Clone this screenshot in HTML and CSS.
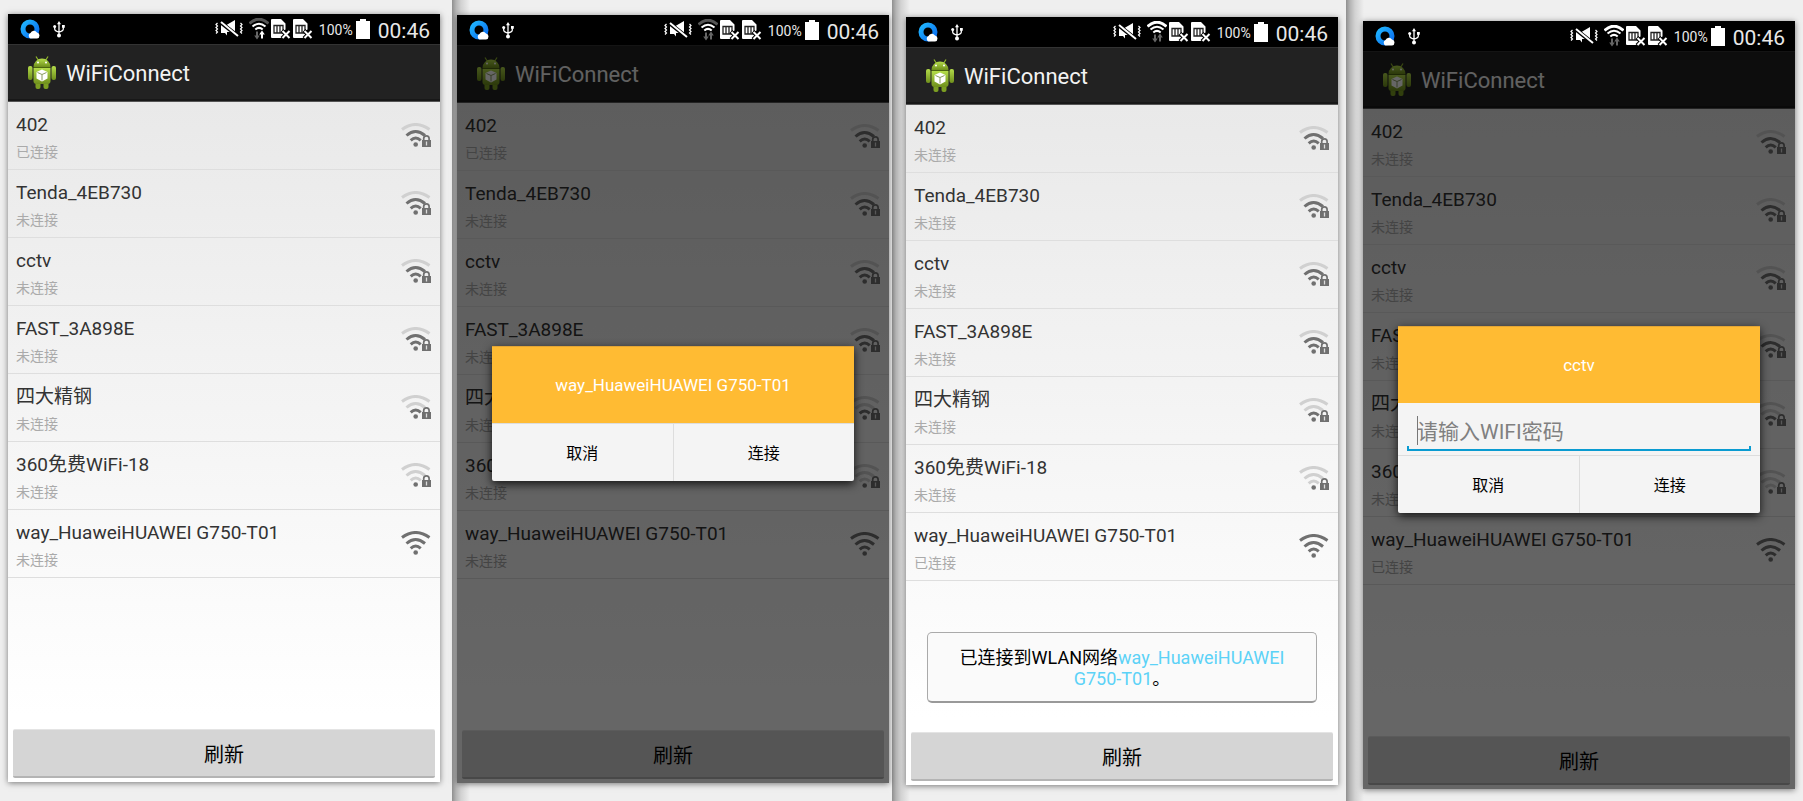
FILE: index.html
```html
<!DOCTYPE html>
<html lang="zh-CN">
<head>
    <meta charset="UTF-8">
    <meta name="viewport" content="width=device-width, initial-scale=1.0">
    <title>WiFiConnect</title>
    <link rel="stylesheet" href="styles.css">
</head>
<body>
    <!-- Shared icons -->
    <svg class="sprite" aria-hidden="true">
        <defs>
            <linearGradient id="ring" x1="0" y1="0" x2="1" y2="1">
                <stop offset="0" stop-color="#1fb6ff"/>
                <stop offset="1" stop-color="#0a6cf0"/>
            </linearGradient>
            <linearGradient id="green" x1="0" y1="0" x2="0" y2="1">
                <stop offset="0" stop-color="#b4dc4a"/>
                <stop offset="1" stop-color="#6f8f1c"/>
            </linearGradient>
        </defs>
        <symbol id="browser" viewBox="0 0 20 20">
            <circle cx="10" cy="10" r="7" fill="none" stroke="url(#ring)" stroke-width="5"/>
            <path d="M10.5 19.5a3 3 0 0 1 0-5.500a3.700 3.700 0 0 1 6.500-0.500a3 3 0 0 1 2.500 3a3 3 0 0 1-2.500 3z" fill="#fff"/>
        </symbol>
        <symbol id="usb" viewBox="0 0 12 17">
            <path d="M6 2v12M1.700 5.500v2.500q0 2 4.300 3q4.300-1 4.300-3v-2.500" fill="none" stroke="#fff" stroke-width="1.300"/>
            <path d="M6 0l2 3.200H4zM9 4h2.800v2.800H9z" fill="#fff"/>
            <circle cx="1.700" cy="5.500" r="1.500" fill="#fff"/>
            <circle cx="6" cy="14.600" r="2" fill="#fff"/>
        </symbol>
        <symbol id="mute" viewBox="0 0 28 18">
            <path d="M2.500 3l-1.500 1.500 1.500 1.500-1.500 1.500 1.500 1.500-1.500 1.500 1.500 1.500-1.500 1.500M25.500 3l1.500 1.500-1.500 1.500 1.500 1.500-1.500 1.500 1.500 1.500-1.500 1.500 1.500 1.500" fill="none" stroke="#fff" stroke-width="1.200"/>
            <path d="M6 4.500h2L17 12.500v-0.500L12 12v3.500l-2-2.500H6z" fill="#fff"/>
            <path d="M11.500 5L20 0v12.500z" fill="#fff"/>
            <path d="M4.500 1.500L23.500 16.500" stroke="#000" stroke-width="4"/>
            <path d="M6 2L23 16" stroke="#fff" stroke-width="2"/>
        </symbol>
        <symbol id="status-wifi" viewBox="0 0 20 22">
            <path class="bar-3" d="M0.500 5.500q9.500-8.500 19 0"/>
            <path class="bar-lit" d="M3.500 8.500q6.500-5.600 13 0M6.300 11.500q3.700-3.200 7.400 0"/>
            <path class="arrow-down" d="M7 13.500h2v4h1.800L8 21.500l-2.800-4H7z"/>
            <path class="arrow-up" d="M12 20.500h2v-4h1.800L13 12.500l-2.800 4H12z"/>
        </symbol>
        <symbol id="sim" viewBox="0 0 20 20">
            <path d="M0 1q0-1 1-1h9l4.500 4.500v6l-3 2 2 3-2.500 3.500H1q-1 0-1-1z" fill="#fff"/>
            <path d="M3 6.500h9v7.500H3zM6 6.500v7.500M9 6.500v7.500" fill="none" stroke="#222" stroke-width="1.300"/>
            <path d="M11 11.500l8 8M19 11.500l-8 8" stroke="#000" stroke-width="4"/>
            <path d="M11.500 12l7 7M18.500 12l-7 7" stroke="#fff" stroke-width="2"/>
        </symbol>
        <symbol id="battery" viewBox="0 0 14 20">
            <path d="M4 0h6v2h4v18H0V2h4z" fill="#fff"/>
        </symbol>
        <symbol id="android" viewBox="0 0 28 34">
            <path d="M8 0.500l2.500 4M20 0.500l-2.500 4" stroke="#8fb52b" stroke-width="1.200"/>
            <path d="M5.500 11a8.500 8.500 0 0 1 17 0z" fill="url(#green)"/>
            <rect x="0" y="10" width="4.500" height="14" rx="2" fill="url(#green)"/>
            <rect x="23.500" y="10" width="4.500" height="14" rx="2" fill="url(#green)"/>
            <rect x="7.500" y="24" width="5" height="9" rx="2" fill="#7c9e22"/>
            <rect x="15.500" y="24" width="5" height="9" rx="2" fill="#7c9e22"/>
            <path d="M5.500 12h17v13q0 3-3 3h-11q-3 0-3-3z" fill="url(#green)"/>
            <path d="M5.500 11.500h17" stroke="#4c6410" stroke-width="1"/>
            <circle cx="10" cy="6.500" r="1" fill="#fff"/>
            <circle cx="18" cy="6.500" r="1" fill="#fff"/>
            <path d="M14 13.500l5.500 2.500v6.500L14 25.500l-5.500-3V16z" fill="#fff"/>
            <path d="M9.500 16.500l4.500 2 4.500-2M14 18.500v6" fill="none" stroke="#8a9a60" stroke-width="1"/>
        </symbol>
        <symbol id="wifi" viewBox="0 0 30 24">
            <path class="bar-3" d="M1 6.500q13.500-10 27.500 0"/>
            <path class="bar-2" d="M5.500 12.500q9-8 18.500 0"/>
            <path class="bar-1" d="M9.700 17.300q5-4.600 10 0"/>
            <circle class="dot" cx="14.700" cy="21.500" r="2.300"/>
        </symbol>
        <symbol id="lock" viewBox="0 0 30 24">
            <path d="M22.700 17.500v-2a2.700 2.700 0 0 1 5.400 0v2" fill="none" stroke="#707070" stroke-width="1.700"/>
            <path d="M21 17h9v7h-9z" fill="#707070"/>
            <path d="M25.500 18.500v4" stroke="#ddd" stroke-width="1.300"/>
        </symbol>
    </svg>

    <main class="board">
        <section class="panel panel-list">
            <div class="phone">
                <div class="status-bar">
                    <svg class="icon-browser"><use href="#browser"/></svg>
                    <svg class="icon-usb"><use href="#usb"/></svg>
                    <svg class="icon-mute"><use href="#mute"/></svg>
                    <svg class="icon-signal weak sending"><use href="#status-wifi"/></svg>
                    <svg class="icon-sim"><use href="#sim"/></svg>
                    <svg class="icon-sim"><use href="#sim"/></svg>
                    <span class="charge">100%</span>
                    <svg class="icon-battery"><use href="#battery"/></svg>
                    <span class="clock">00:46</span>
                </div>
                <header class="action-bar">
                    <svg class="icon-android"><use href="#android"/></svg>
                    <h1>WiFiConnect</h1>
                </header>
                <div class="content">
                    <ul class="network-list">
                        <li><div><h2>402</h2><p>已连接</p></div><svg class="wifi level-2"><use href="#wifi"/><use href="#lock"/></svg></li>
                        <li><div><h2>Tenda_4EB730</h2><p>未连接</p></div><svg class="wifi level-2"><use href="#wifi"/><use href="#lock"/></svg></li>
                        <li><div><h2>cctv</h2><p>未连接</p></div><svg class="wifi level-2"><use href="#wifi"/><use href="#lock"/></svg></li>
                        <li><div><h2>FAST_3A898E</h2><p>未连接</p></div><svg class="wifi level-2"><use href="#wifi"/><use href="#lock"/></svg></li>
                        <li><div><h2>四大精钢</h2><p>未连接</p></div><svg class="wifi level-1"><use href="#wifi"/><use href="#lock"/></svg></li>
                        <li><div><h2>360免费WiFi-18</h2><p>未连接</p></div><svg class="wifi level-0"><use href="#wifi"/><use href="#lock"/></svg></li>
                        <li><div><h2>way_HuaweiHUAWEI G750-T01</h2><p>未连接</p></div><svg class="wifi"><use href="#wifi"/></svg></li>
                    </ul>
                    <button class="refresh" type="button">刷新</button>
                </div>
            </div>
        </section>

        <section class="panel panel-confirm">
            <div class="phone">
                <div class="status-bar">
                    <svg class="icon-browser"><use href="#browser"/></svg>
                    <svg class="icon-usb"><use href="#usb"/></svg>
                    <svg class="icon-mute"><use href="#mute"/></svg>
                    <svg class="icon-signal weak"><use href="#status-wifi"/></svg>
                    <svg class="icon-sim"><use href="#sim"/></svg>
                    <svg class="icon-sim"><use href="#sim"/></svg>
                    <span class="charge">100%</span>
                    <svg class="icon-battery"><use href="#battery"/></svg>
                    <span class="clock">00:46</span>
                </div>
                <header class="action-bar">
                    <svg class="icon-android"><use href="#android"/></svg>
                    <h1>WiFiConnect</h1>
                </header>
                <div class="content">
                    <ul class="network-list">
                        <li><div><h2>402</h2><p>已连接</p></div><svg class="wifi level-2"><use href="#wifi"/><use href="#lock"/></svg></li>
                        <li><div><h2>Tenda_4EB730</h2><p>未连接</p></div><svg class="wifi level-2"><use href="#wifi"/><use href="#lock"/></svg></li>
                        <li><div><h2>cctv</h2><p>未连接</p></div><svg class="wifi level-2"><use href="#wifi"/><use href="#lock"/></svg></li>
                        <li><div><h2>FAST_3A898E</h2><p>未连接</p></div><svg class="wifi level-2"><use href="#wifi"/><use href="#lock"/></svg></li>
                        <li><div><h2>四大精钢</h2><p>未连接</p></div><svg class="wifi level-1"><use href="#wifi"/><use href="#lock"/></svg></li>
                        <li><div><h2>360免费WiFi-18</h2><p>未连接</p></div><svg class="wifi level-0"><use href="#wifi"/><use href="#lock"/></svg></li>
                        <li><div><h2>way_HuaweiHUAWEI G750-T01</h2><p>未连接</p></div><svg class="wifi"><use href="#wifi"/></svg></li>
                    </ul>
                    <button class="refresh" type="button">刷新</button>
                </div>
                <div class="overlay">
                    <div class="dialog" role="dialog" aria-labelledby="confirmTitle">
                        <h3 id="confirmTitle">way_HuaweiHUAWEI G750-T01</h3>
                        <div class="dialog-buttons">
                            <button type="button">取消</button>
                            <button type="button">连接</button>
                        </div>
                    </div>
                </div>
            </div>
        </section>

        <section class="panel panel-toast">
            <div class="phone">
                <div class="status-bar">
                    <svg class="icon-browser"><use href="#browser"/></svg>
                    <svg class="icon-usb"><use href="#usb"/></svg>
                    <svg class="icon-mute"><use href="#mute"/></svg>
                    <svg class="icon-signal"><use href="#status-wifi"/></svg>
                    <svg class="icon-sim"><use href="#sim"/></svg>
                    <svg class="icon-sim"><use href="#sim"/></svg>
                    <span class="charge">100%</span>
                    <svg class="icon-battery"><use href="#battery"/></svg>
                    <span class="clock">00:46</span>
                </div>
                <header class="action-bar">
                    <svg class="icon-android"><use href="#android"/></svg>
                    <h1>WiFiConnect</h1>
                </header>
                <div class="content">
                    <ul class="network-list">
                        <li><div><h2>402</h2><p>未连接</p></div><svg class="wifi level-2"><use href="#wifi"/><use href="#lock"/></svg></li>
                        <li><div><h2>Tenda_4EB730</h2><p>未连接</p></div><svg class="wifi level-2"><use href="#wifi"/><use href="#lock"/></svg></li>
                        <li><div><h2>cctv</h2><p>未连接</p></div><svg class="wifi level-2"><use href="#wifi"/><use href="#lock"/></svg></li>
                        <li><div><h2>FAST_3A898E</h2><p>未连接</p></div><svg class="wifi level-2"><use href="#wifi"/><use href="#lock"/></svg></li>
                        <li><div><h2>四大精钢</h2><p>未连接</p></div><svg class="wifi level-1"><use href="#wifi"/><use href="#lock"/></svg></li>
                        <li><div><h2>360免费WiFi-18</h2><p>未连接</p></div><svg class="wifi level-0"><use href="#wifi"/><use href="#lock"/></svg></li>
                        <li><div><h2>way_HuaweiHUAWEI G750-T01</h2><p>已连接</p></div><svg class="wifi"><use href="#wifi"/></svg></li>
                    </ul>
                    <button class="refresh" type="button">刷新</button>
                </div>
                <div class="toast" role="status">已连接到WLAN网络<span>way_HuaweiHUAWEI G750-T01</span>。</div>
            </div>
        </section>

        <section class="panel panel-password">
            <div class="phone">
                <div class="status-bar">
                    <svg class="icon-browser"><use href="#browser"/></svg>
                    <svg class="icon-usb"><use href="#usb"/></svg>
                    <svg class="icon-mute"><use href="#mute"/></svg>
                    <svg class="icon-signal"><use href="#status-wifi"/></svg>
                    <svg class="icon-sim"><use href="#sim"/></svg>
                    <svg class="icon-sim"><use href="#sim"/></svg>
                    <span class="charge">100%</span>
                    <svg class="icon-battery"><use href="#battery"/></svg>
                    <span class="clock">00:46</span>
                </div>
                <header class="action-bar">
                    <svg class="icon-android"><use href="#android"/></svg>
                    <h1>WiFiConnect</h1>
                </header>
                <div class="content">
                    <ul class="network-list">
                        <li><div><h2>402</h2><p>未连接</p></div><svg class="wifi level-2"><use href="#wifi"/><use href="#lock"/></svg></li>
                        <li><div><h2>Tenda_4EB730</h2><p>未连接</p></div><svg class="wifi level-2"><use href="#wifi"/><use href="#lock"/></svg></li>
                        <li><div><h2>cctv</h2><p>未连接</p></div><svg class="wifi level-2"><use href="#wifi"/><use href="#lock"/></svg></li>
                        <li><div><h2>FAST_3A898E</h2><p>未连接</p></div><svg class="wifi level-2"><use href="#wifi"/><use href="#lock"/></svg></li>
                        <li><div><h2>四大精钢</h2><p>未连接</p></div><svg class="wifi level-1"><use href="#wifi"/><use href="#lock"/></svg></li>
                        <li><div><h2>360免费WiFi-18</h2><p>未连接</p></div><svg class="wifi level-0"><use href="#wifi"/><use href="#lock"/></svg></li>
                        <li><div><h2>way_HuaweiHUAWEI G750-T01</h2><p>已连接</p></div><svg class="wifi"><use href="#wifi"/></svg></li>
                    </ul>
                    <button class="refresh" type="button">刷新</button>
                </div>
                <div class="overlay">
                    <form class="dialog" role="dialog" aria-labelledby="passwordTitle">
                        <h3 id="passwordTitle">cctv</h3>
                        <div class="field">
                            <div class="field-line">
                                <input type="text" aria-labelledby="passwordTitle" placeholder="请输入WIFI密码">
                            </div>
                        </div>
                        <div class="dialog-buttons">
                            <button type="button">取消</button>
                            <button type="button">连接</button>
                        </div>
                    </form>
                </div>
            </div>
        </section>
    </main>
</body>
</html>
```

FILE: styles.css
```css
* {
    box-sizing: border-box;
}

body {
    margin: 0;
    background: #efefef;
    font-family: Roboto, "Noto Sans CJK SC", sans-serif;
}

h1, h2, h3, p, ul {
    margin: 0;
    padding: 0;
    font-weight: 400;
}

button, input {
    font-family: inherit;
    border: none;
}

.sprite {
    position: absolute;
    width: 0;
    height: 0;
}

.board {
    display: flex;
    min-height: 100vh;
}

.panel {
    display: flex;
    min-width: 0;
    background: linear-gradient(to right, #8f8f8f, #b4b4b4 4px, #d2d2d2 9px, #efefef 18px);
}

.panel-list {
    flex: 1 1 452px;
    padding: 14px 12px 19px 8px;
    background: #efefef;
}

.panel-confirm {
    flex: 1 1 440px;
    padding: 15px 3px 18px 5px;
}

.panel-toast {
    flex: 1 1 454px;
    padding: 17px 8px 16px 14px;
}

.panel-password {
    flex: 1 1 457px;
    padding: 21px 8px 12px 17px;
}

.phone {
    position: relative;
    display: flex;
    flex-direction: column;
    flex: 1;
    min-width: 0;
    box-shadow: 0 1px 6px rgba(0, 0, 0, 0.5);
}

/* Status bar */
.status-bar {
    display: flex;
    align-items: center;
    height: 30px;
    padding: 0 10px 0 12px;
    background: #000;
    color: #e8e8e8;
}

.icon-browser {
    width: 20px;
    height: 20px;
}

.icon-usb {
    width: 12px;
    height: 17px;
    margin-left: 13px;
}

.icon-mute {
    width: 28px;
    height: 18px;
    margin-left: auto;
}

.icon-signal {
    width: 20px;
    height: 22px;
    margin: 0 2px 0 6px;
    fill: #666;
    --bar-3: #fff;
    --arrow-up: #666;
}

.icon-signal.weak {
    --bar-3: #555;
}

.icon-signal.sending {
    --arrow-up: #fff;
}

.arrow-up {
    fill: var(--arrow-up);
}

.icon-sim {
    width: 20px;
    height: 20px;
    margin-right: 2px;
}

.charge {
    margin: 2px 3px 0 4px;
    font-size: 14px;
}

.icon-battery {
    width: 14px;
    height: 20px;
    margin-right: 8px;
}

.clock {
    font-size: 21px;
    line-height: 28px;
    padding-top: 3px;
}

/* Action bar */
.action-bar {
    display: flex;
    align-items: center;
    gap: 10px;
    height: 58px;
    padding-left: 20px;
    background: #222;
    border-top: 1px solid #333;
    border-bottom: 1px solid #555;
    box-shadow: inset 0 -2px 0 #181818;
    color: #f3f3f3;
}

.action-bar h1 {
    padding-top: 2px;
    font-size: 22px;
    line-height: 28px;
}

.icon-android {
    width: 28px;
    height: 34px;
}

/* Network list */
.content {
    display: flex;
    flex-direction: column;
    flex: 1;
    padding-bottom: 4px;
    background: linear-gradient(#e9e9e9, #fff 90%);
}

.network-list {
    list-style: none;
    flex: 1;
}

.network-list li {
    display: flex;
    align-items: center;
    justify-content: space-between;
    height: 68px;
    padding: 0 9px 1px 8px;
    border-bottom: 1px solid #dedede;
}

.network-list h2 {
    padding-top: 6px;
    color: #333;
    font-size: 19px;
    line-height: 28px;
}

.network-list p {
    color: #aaa;
    font-size: 14px;
    line-height: 26px;
}

.wifi {
    flex: none;
    width: 30px;
    height: 24px;
    --bar-1: #707070;
    --bar-2: #707070;
    --bar-3: #707070;
}

.wifi.level-2 {
    --bar-3: #d0d0d0;
}

.wifi.level-1 {
    --bar-2: #d0d0d0;
    --bar-3: #d0d0d0;
}

.wifi.level-0 {
    --bar-1: #d0d0d0;
    --bar-2: #d0d0d0;
    --bar-3: #d0d0d0;
}

.bar-1, .bar-2, .bar-3, .bar-lit {
    fill: none;
    stroke-width: 3px;
}

.bar-1 {
    stroke: var(--bar-1);
}

.bar-2 {
    stroke: var(--bar-2);
}

.bar-3 {
    stroke: var(--bar-3);
}

.bar-lit, .icon-signal .bar-3 {
    stroke-width: 2px;
}

.bar-lit {
    stroke: #fff;
}

.dot {
    fill: #707070;
}

.refresh {
    height: 49px;
    margin: 0 5px;
    background: #d5d5d5;
    border-top: 1px solid #e4e4e4;
    border-bottom: 2px solid #b4b4b4;
    border-radius: 2px;
    color: #000;
    font-size: 20px;
}

/* Dialogs */
.overlay {
    position: absolute;
    top: 30px;
    right: 0;
    bottom: 0;
    left: 0;
    display: flex;
    align-items: center;
    padding: 0 35px 2px;
    background: rgba(0, 0, 0, 0.6);
}

.dialog {
    flex: 1;
    background: #f4f4f4;
    border-radius: 2px;
    box-shadow: 0 3px 10px rgba(0, 0, 0, 0.8);
}

.dialog h3 {
    background: #fb3;
    border-top: 1px solid #e3a536;
    color: #fff;
    font-size: 17px;
    line-height: 76px;
    text-align: center;
}

.field {
    padding: 5px 9px 4px;
}

.field-line {
    border: 2px solid #0a9bd1;
    border-top: none;
    border-image: linear-gradient(transparent 38px, #0a9bd1 38px) 2;
}

.field input {
    display: block;
    width: 100%;
    height: 41px;
    padding: 8px 8px 0;
    background: linear-gradient(#777, #777) 8px 8px / 1px 29px no-repeat;
    color: #000;
    font-size: 21px;
    outline: none;
}

.field input::placeholder {
    color: #808080;
}

.dialog-buttons {
    display: flex;
    border-top: 1px solid #ddd;
}

.dialog-buttons button {
    flex: 1;
    height: 57px;
    background: none;
    color: #000;
    font-size: 16px;
}

.dialog-buttons button + button {
    border-left: 1px solid #ddd;
}

/* Toast */
.toast {
    position: absolute;
    right: 21px;
    bottom: 82px;
    left: 21px;
    padding: 14px 30px 12px;
    background: #fafafa;
    border: 1px solid #aaa;
    border-bottom: 2px solid #999;
    border-radius: 5px;
    color: #000;
    font-size: 18px;
    line-height: 21px;
    text-align: center;
}

.toast span {
    color: #5cd2f7;
}
```
